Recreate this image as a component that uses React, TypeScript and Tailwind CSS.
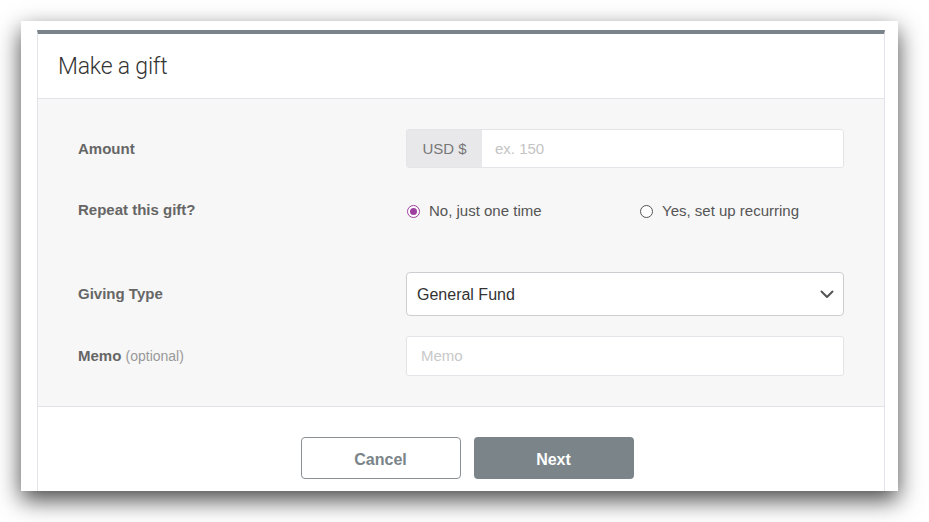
import React from "react";

function Radio({ checked }: { checked?: boolean }) {
  return checked ? (
    <span className="flex h-[13px] w-[13px] items-center justify-center rounded-full border-[1.5px] border-[#9c3f9f] bg-white">
      <span className="h-[7px] w-[7px] rounded-full bg-[#9c3f9f]" />
    </span>
  ) : (
    <span className="h-[13px] w-[13px] rounded-full border border-[#555] bg-white" />
  );
}

export default function App() {
  return (
    <div
      className="h-[522px] w-[929px] overflow-hidden bg-white pl-[21px] pt-[21px]"
      style={{ fontFamily: '"Liberation Sans", Arial, sans-serif' }}
    >
      <div className="h-[470px] w-[877px] overflow-hidden bg-white pl-[16px] pt-[9px] shadow-[0_9px_22px_rgba(0,0,0,0.72)]">
        <div className="w-[848px] border-x border-t-4 border-x-[#e2e2e8] border-t-[#798389] bg-white">
          {/* Header */}
          <div className="flex h-[65px] items-center border-b border-[#e2e2e8] pl-[20px] pt-[3px]">
            <h1
              className="text-[23px] font-light tracking-[-0.2px] text-[#333]"
              style={{ fontFamily: '"Roboto", "Liberation Sans", sans-serif', fontWeight: 300 }}
            >
              Make a gift
            </h1>
          </div>

          {/* Body */}
          <div className="border-b border-[#e2e2e8] bg-[#f7f7f7] px-[40px] pb-[30px] pt-[30px]">
            <div className="flex items-center">
              <div className="w-[328px] pt-[2px] text-[15px] font-bold text-[#666]">Amount</div>
              <div className="flex h-[39px] flex-1 overflow-hidden rounded-[3px] border border-[#e4e4e8]">
                <div className="flex w-[75px] items-center justify-center bg-[#e8e8eb] pt-[2px] text-[15px] text-[#777]">
                  USD $
                </div>
                <div className="flex flex-1 items-center bg-white pl-[13px] pt-[2px] text-[15px] text-[#c4c4c4]">
                  ex. 150
                </div>
              </div>
            </div>

            <div className="mt-[30px] flex h-[24px] items-center">
              <div className="w-[328px] pt-[1px] text-[15px] font-bold text-[#666]">Repeat this gift?</div>
              <div className="flex flex-1 items-center pt-[2px]">
                <div className="flex w-[234px] items-center gap-[9px] pl-[1px] text-[15px] text-[#555]">
                  <Radio checked />
                  <span className="pt-[1px]">No, just one time</span>
                </div>
                <div className="flex items-center gap-[9px] text-[15px] text-[#555]">
                  <Radio />
                  <span className="pt-[1px]">Yes, set up recurring</span>
                </div>
              </div>
            </div>

            <div className="mt-[50px] flex items-center">
              <div className="w-[328px] pt-[1px] text-[15px] font-bold text-[#666]">Giving Type</div>
              <div className="flex h-[44px] flex-1 items-center justify-between rounded-[4px] border border-[#cdcdd1] bg-white pl-[10px] pr-[9px] text-[16px] text-[#333]">
                <span className="pt-[1px]">General Fund</span>
                <svg width="14" height="9" viewBox="0 0 14 9" fill="none">
                  <path d="M1.5 1.5L7 7l5.5-5.5" stroke="#555" strokeWidth="2" strokeLinecap="round" strokeLinejoin="round" />
                </svg>
              </div>
            </div>

            <div className="mt-[20px] flex items-center">
              <div className="w-[328px] pt-[1px] text-[15px] text-[#666]">
                <span className="font-bold">Memo</span>{" "}
                <span className="text-[14px] font-light text-[#999]">(optional)</span>
              </div>
              <div className="flex h-[40px] flex-1 items-center rounded-[3px] border border-[#e4e4e8] bg-white pl-[14px] pt-[1px] text-[15px] text-[#c8c8c8]">
                Memo
              </div>
            </div>
          </div>

          {/* Footer */}
          <div className="flex justify-center gap-[13px] bg-white pl-[12px] pt-[30px] pb-[30px]">
            <button className="h-[42px] w-[160px] rounded-[4px] border border-[#8a8f93] bg-white pt-[3px] text-[16px] font-bold text-[#7a8489]">
              Cancel
            </button>
            <button className="h-[42px] w-[160px] rounded-[4px] bg-[#7a8489] pt-[3px] text-[16px] font-bold text-white">
              Next
            </button>
          </div>
        </div>
      </div>
    </div>
  );
}
